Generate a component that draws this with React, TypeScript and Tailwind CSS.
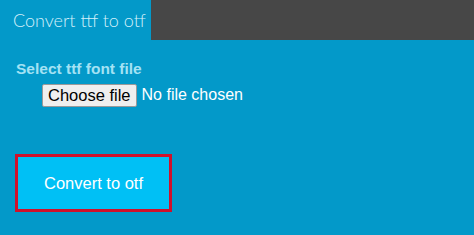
export default function App() {
  return (
    <div className="w-[474px] h-[235px] bg-[#0399c9] overflow-hidden">
      {/* Tabs */}
      <div className="flex h-[40px]">
        <div className="w-[151px] flex items-center pl-[13px] text-[18px] font-light text-[#d4f0fa] font-['Lato',sans-serif]">
          Convert ttf to otf
        </div>
        <div className="flex-1 bg-[#474747]" />
      </div>

      {/* Form */}
      <div className="pl-[16px] pt-[20px] font-['Liberation_Sans',Arial,sans-serif]">
        <p className="text-[15.5px] font-bold text-[#a3e2f4] leading-[17px]">
          Select ttf font file
        </p>
        <div className="flex items-center mt-[6px] ml-[26px]">
          <button className="h-[23px] px-[5px] bg-[#efefef] border border-[#9a9a9a] rounded-[2px] text-[16.5px] text-black leading-none">
            Choose file
          </button>
          <span className="ml-[5px] text-[16px] text-white">No file chosen</span>
        </div>
        <button className="mt-[47px] -ml-[1px] w-[157px] h-[58px] border-[3px] border-[#d0112b] bg-[#00c0f5] text-white text-[16.5px]">
          Convert to otf
        </button>
      </div>
    </div>
  );
}
